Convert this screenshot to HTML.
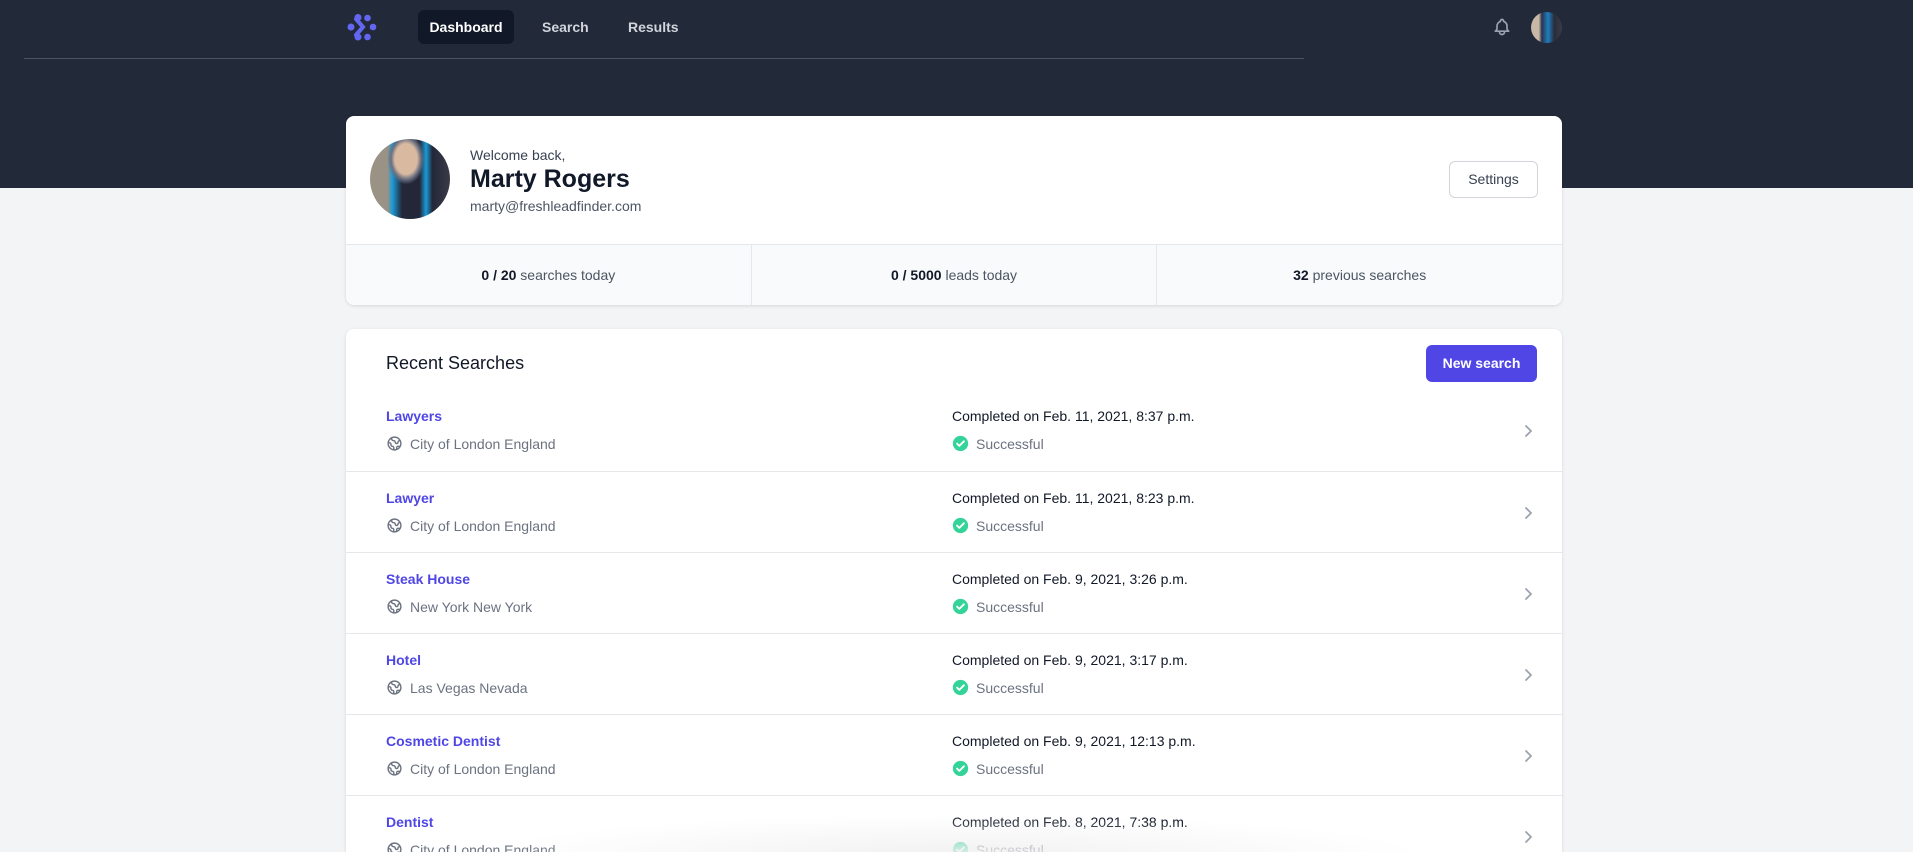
<!DOCTYPE html>
<html style="overflow:hidden;height:852px"><head><meta charset="utf-8"><style>
*{box-sizing:border-box;margin:0;padding:0}
body{width:1913px;height:852px;overflow:hidden;background:#f3f4f6;font-family:"Liberation Sans",sans-serif;position:relative;color:#111827}
.band{position:absolute;left:0;top:0;width:1913px;height:188px;background:#222a3a}
.line{position:absolute;left:24px;top:58px;width:1280px;height:1px;background:#4b5563}
.nav{position:absolute;top:10px;height:34px;font-size:14px;font-weight:bold;color:#d1d5db;line-height:34px}
.pill{left:418px;width:96px;background:#111827;color:#fff;border-radius:6px;text-align:center}
.card{position:absolute;left:346px;width:1216px;background:#fff;border-radius:8px;box-shadow:0 1px 3px rgba(0,0,0,.12)}
.stats{position:absolute;left:0;top:128px;width:1216px;height:61px;background:#f9fafb;border-top:1px solid #e5e7eb;border-radius:0 0 8px 8px;display:flex}
.stats div{flex:1;text-align:center;line-height:60px;font-size:14px;color:#4b5563}
.stats div+div{border-left:1px solid #e5e7eb}
.stats b{color:#111827}
.row{position:absolute;left:0;width:1216px;height:81px;border-top:1px solid #e5e7eb}
.t{position:absolute;left:40px;top:18px;font-size:14px;color:#4f46e5;font-weight:bold}
.loc{position:absolute;left:40px;top:45px;font-size:14px;color:#6b7280;display:flex;align-items:center;gap:7px}
.c{position:absolute;left:606px;top:18px;font-size:14px;color:#111827}
.s{position:absolute;left:606px;top:45px;font-size:14px;color:#6b7280;display:flex;align-items:center;gap:7px}
.ch{position:absolute;left:1176px;top:33px}
</style></head><body>
<div class="band"></div>
<div class="line"></div>
<svg style="position:absolute;left:344px;top:10px" width="36" height="36" viewBox="344 10 36 36"><g fill="#6366f1"><circle cx="351" cy="27" r="3.5"/><circle cx="358" cy="17.5" r="3.5"/><circle cx="358" cy="37" r="3.5"/><circle cx="367.5" cy="18" r="3.3"/><circle cx="373" cy="27" r="3.3"/><circle cx="367.5" cy="37" r="3.3"/></g><path d="M356 19 L363 27 L356 35" stroke="#6366f1" stroke-width="4" fill="none" stroke-linecap="round"/></svg>
<div class="nav pill">Dashboard</div>
<div class="nav" style="left:542px">Search</div>
<div class="nav" style="left:628px">Results</div>
<svg style="position:absolute;left:1492px;top:16px" width="20" height="22" viewBox="0 0 24 24" fill="none" stroke="#9ca3af" stroke-width="2" stroke-linecap="round" stroke-linejoin="round"><path d="M15 17h5l-1.4-1.4A2 2 0 0118 14.2V11a6 6 0 00-4-5.7V5a2 2 0 10-4 0v.3C7.7 6.1 6 8.4 6 11v3.2c0 .5-.2 1-.6 1.4L4 17h5m6 0v1a3 3 0 11-6 0v-1m6 0H9"/></svg>
<div style="position:absolute;left:1531px;top:12px;width:31px;height:31px;border-radius:50%;background:linear-gradient(90deg,#c9b8a5 0 25%,#2a3350 35%,#1e7fc0 55%,#2a2d3a 75%,#3a3b48)"></div>

<div class="card" style="top:116px;height:189px">
  <div style="position:absolute;left:24px;top:23px;width:80px;height:80px;border-radius:50%;background:radial-gradient(ellipse at 45% 25%,#d9b9a0 0 18%,#6a7080 24%,transparent 30%),linear-gradient(90deg,#9a9285 0 22%,#1a9bd8 28%,#232738 40%,#232738 62%,#1a9bd8 70%,#232738 78%,#3a3b48 100%)"></div>
  <div style="position:absolute;left:124px;top:31px;font-size:14px;color:#374151">Welcome back,</div>
  <div style="position:absolute;left:124px;top:49px;font-size:25px;font-weight:bold;color:#111827">Marty Rogers</div>
  <div style="position:absolute;left:124px;top:82px;font-size:14px;color:#4b5563">marty@freshleadfinder.com</div>
  <div style="position:absolute;left:1103px;top:45px;width:89px;height:37px;border:1px solid #d1d5db;border-radius:6px;text-align:center;line-height:35px;font-size:14px;color:#374151">Settings</div>
  <div class="stats"><div><b>0 / 20</b> searches today</div><div><b>0 / 5000</b> leads today</div><div><b>32</b> previous searches</div></div>
</div>

<div class="card" style="top:329px;height:540px">
  <div style="position:absolute;left:40px;top:24px;font-size:18px;color:#111827">Recent Searches</div>
  <div style="position:absolute;left:1080px;top:16px;width:111px;height:37px;background:#4f46e5;border-radius:6px;color:#fff;font-weight:bold;font-size:14px;text-align:center;line-height:37px">New search</div>
  <div id="rows"></div>
</div>
<div style="position:absolute;left:480px;top:815px;width:950px;height:40px;background:radial-gradient(ellipse at 50% 100%,rgba(240,240,240,.9),rgba(255,255,255,0) 70%)"></div>
<script>
var d=[["Lawyers","City of London England","Feb. 11, 2021, 8:37 p.m."],["Lawyer","City of London England","Feb. 11, 2021, 8:23 p.m."],["Steak House","New York New York","Feb. 9, 2021, 3:26 p.m."],["Hotel","Las Vegas Nevada","Feb. 9, 2021, 3:17 p.m."],["Cosmetic Dentist","City of London England","Feb. 9, 2021, 12:13 p.m."],["Dentist","City of London England","Feb. 8, 2021, 7:38 p.m."]];
var g='<svg width="17" height="17" viewBox="0 0 24 24" fill="none" stroke="#6b7280" stroke-width="2" stroke-linecap="round" stroke-linejoin="round"><path d="M3.1 11H5a2 2 0 012 2v1a2 2 0 002 2 2 2 0 012 2v2.9M8 3.9V5.5A2.5 2.5 0 0010.5 8h.5a2 2 0 012 2 2 2 0 104 0 2 2 0 012-2h1.1M15 20.5V18a2 2 0 012-2h3.1M21 12a9 9 0 11-18 0 9 9 0 0118 0z"/></svg>';
var ck='<svg width="17" height="17" viewBox="0 0 20 20"><circle cx="10" cy="10" r="9" fill="#34d399"/><path d="M6 10.2l2.6 2.6L14 7.4" stroke="#fff" stroke-width="2.2" fill="none" stroke-linecap="round" stroke-linejoin="round"/></svg>';
var h='';d.forEach(function(r,i){h+='<div class="row" style="top:'+(61+i*81)+'px;'+(i==0?'border-top:none':'')+'"><div class="t">'+r[0]+'</div><div class="loc">'+g+r[1]+'</div><div class="c">Completed on '+r[2]+'</div><div class="s">'+ck+'Successful</div><svg class="ch" width="12" height="16" viewBox="0 0 12 16"><path d="M4 3l5 5-5 5" stroke="#9ca3af" stroke-width="1.8" fill="none" stroke-linecap="round"/></svg></div>'});
document.getElementById('rows').innerHTML=h;
</script>
</body></html>
